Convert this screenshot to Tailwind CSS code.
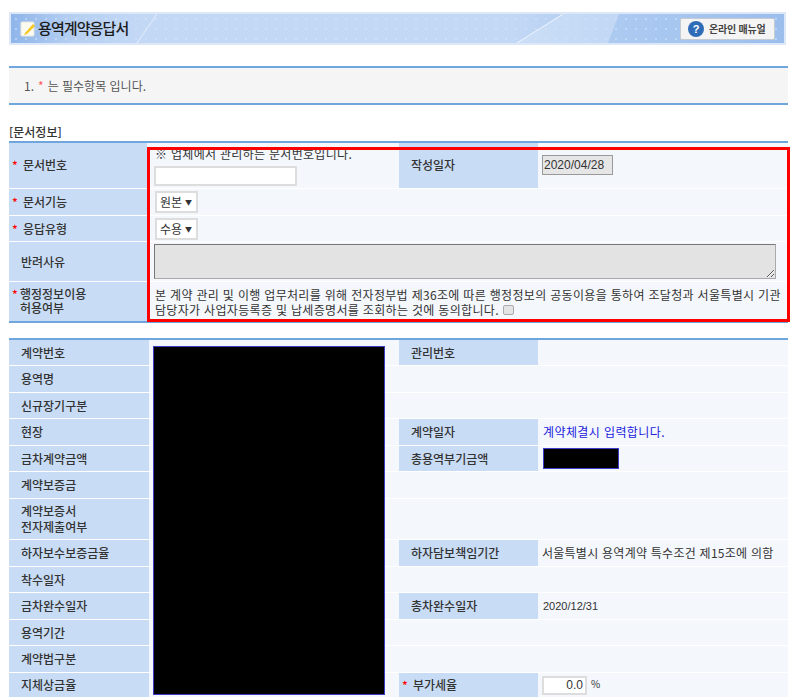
<!DOCTYPE html>
<html lang="ko">
<head>
<meta charset="UTF-8">
<title>용역계약응답서</title>
<script src="https://cdn.jsdelivr.net/npm/@tailwindcss/browser@4"></script>
</head>
<body class="bg-white text-[#333] text-[12px] font-['Liberation_Sans','Noto_Sans_CJK_KR',sans-serif] overflow-hidden">
<div class="relative h-[697px] w-[800px] overflow-hidden pl-[9px] pt-[12px]">

	<!-- title bar -->
	<div class="relative flex h-[33px] w-[777px] items-center justify-between overflow-hidden border-2 border-[#dce8f8] bg-[linear-gradient(90deg,#8fb5ea_0px,#b5cff2_60px,#c3d8f5_130px,#c3d8f5_500px,#aecbf1_590px,#9cbeed_770px)]">
		<div class="absolute inset-0 bg-[radial-gradient(#d8e6f9_1px,transparent_1px)] bg-[size:10px_10px] opacity-50"></div>
		<svg class="absolute inset-0" width="773" height="29" viewBox="0 0 773 29">
			<polygon points="506,29 552,0 608,0 597,29" fill="#d3e3f8" fill-opacity="0.55"/>
			<line x1="506" y1="29" x2="552" y2="0" stroke="#eef4fc" stroke-width="1"/>
			<line x1="126" y1="29" x2="146" y2="0" stroke="#e3edfa" stroke-width="1"/>
		</svg>
		<div class="relative flex items-center pl-[9px]">
			<svg class="mr-[2px]" width="16" height="16" viewBox="0 0 16 16">
				<rect x="1" y="1" width="13" height="14" rx="1" fill="#fbfaf0" stroke="#e8e8e0"/>
				<path d="M5 12 L13 3 L15 5 L7 13 L4 14 Z" fill="#f3c623"/>
			</svg>
			<span class="text-[15px] font-medium tracking-[-0.9px] text-[#1c1c1c] font-['Noto_Sans_CJK_KR',sans-serif]">용역계약응답서</span>
		</div>
		<div class="relative mr-[9px] flex h-[22px] w-[95px] items-center rounded-[2px] border border-[#c6cbd2] bg-[#f4f4f4] pl-[7px]">
			<svg width="16" height="16" viewBox="0 0 16 16">
				<circle cx="8" cy="8" r="8" fill="#2f6cb8"/>
				<text x="8" y="12" text-anchor="middle" font-size="11" font-weight="700" fill="#fff" font-family="Liberation Sans">?</text>
			</svg>
			<span class="ml-[5px] text-[10px] font-bold tracking-[-0.2px] text-[#444] font-['Noto_Sans_CJK_KR',sans-serif]">온라인 매뉴얼</span>
		</div>
	</div>

	<!-- notice -->
	<div class="mt-[21px] flex h-[39px] w-[779px] items-center border-y-2 border-[#6fa6de] bg-[#f5f5f5] pl-[15px] text-[#555] font-['Noto_Sans_CJK_KR',sans-serif]">
		1. <span class="mx-[4px] text-[#f55]">*</span> 는 필수항목 입니다.
	</div>

	<div class="mt-[19px] h-[17px] text-[12px] font-medium leading-[16px] font-['Noto_Sans_CJK_KR',sans-serif]">[문서정보]</div>

	<!-- document info -->
	<div class="w-[779px] border-y-2 border-[#6fa6de] bg-[#f4f7fc] font-['Noto_Sans_CJK_KR',sans-serif]">
		<div class="flex h-[46px] border-b border-white">
			<div class="flex w-[138px] shrink-0 items-center bg-[#c9dcf5] pb-[1px] pl-[3px] font-medium"><span class="w-[11px] text-[#f00]">*</span>문서번호</div>
			<div class="w-[252px] shrink-0 pl-[7px] pt-[2px]">
				<div class="h-[18px] whitespace-nowrap pl-[1px] leading-[18px] tracking-[0.3px]">※ 업체에서 관리하는 문서번호입니다.</div>
				<input type="text" class="mt-[3px] block h-[20px] w-[143px] border-2 border-[#ddd] bg-white">
			</div>
			<div class="flex w-[139px] shrink-0 items-center bg-[#c9dcf5] pb-[1px] pl-[12px] font-medium">작성일자</div>
			<div class="flex flex-1 items-center pb-[1px] pl-[4px]">
				<input type="text" value="2020/04/28" disabled class="h-[20px] w-[71px] border border-[#999] bg-[#e6e6e6] pl-[1px] text-[#333] font-['Liberation_Sans',sans-serif]">
			</div>
		</div>
		<div class="flex h-[27px] border-b border-white">
			<div class="flex w-[138px] shrink-0 items-center bg-[#c9dcf5] pl-[3px] font-medium"><span class="w-[11px] text-[#f00]">*</span>문서기능</div>
			<div class="flex flex-1 items-center pl-[8px]">
				<div class="relative h-[22px] w-[43px]">
					<select class="h-full w-full appearance-none border-2 border-[#ddd] bg-white pl-[3px]"><option>원본</option></select>
					<span class="pointer-events-none absolute right-[6px] top-[6px] text-[7px]">▼</span>
				</div>
			</div>
		</div>
		<div class="flex h-[26px] border-b border-white">
			<div class="flex w-[138px] shrink-0 items-center bg-[#c9dcf5] pl-[3px] font-medium"><span class="w-[11px] text-[#f00]">*</span>응답유형</div>
			<div class="flex flex-1 items-center pl-[8px]">
				<div class="relative h-[22px] w-[43px]">
					<select class="h-full w-full appearance-none border-2 border-[#ddd] bg-white pl-[3px]"><option>수용</option></select>
					<span class="pointer-events-none absolute right-[6px] top-[6px] text-[7px]">▼</span>
				</div>
			</div>
		</div>
		<div class="flex h-[40px] border-b border-white">
			<div class="flex w-[138px] shrink-0 items-center bg-[#c9dcf5] pl-[12px] font-medium">반려사유</div>
			<div class="flex flex-1 items-center pl-[7px]">
				<textarea disabled class="block h-[35px] w-[622px] border border-t-[#777] border-l-[#777] border-r-[#aaa] border-b-[#aaa] bg-[#e3e3e3]"></textarea>
			</div>
		</div>
		<div class="flex h-[39px]">
			<div class="flex w-[138px] shrink-0 bg-[#c9dcf5] pl-[3px] pt-[5px] font-medium leading-[14px]">
				<span class="w-[8px] text-[#f00]">*</span>
				<div>행정정보이용<br>허용여부</div>
			</div>
			<div class="min-w-0 flex-1 pl-[8px] pt-[5px] leading-[15px] tracking-[0.32px]">
				<div class="whitespace-nowrap">본 계약 관리 및 이행 업무처리를 위해 전자정부법 제36조에 따른 행정정보의 공동이용을 통하여 조달청과 서울특별시 기관</div>
				<div class="flex items-center whitespace-nowrap">담당자가 사업자등록증 및 납세증명서를 조회하는 것에 동의합니다.
					<input type="checkbox" disabled class="ml-[4px] h-[10px] w-[11px] appearance-none rounded-[2px] border border-[#aaa] bg-[#e4e4e4]">
				</div>
			</div>
		</div>
	</div>

	<!-- contract info -->
	<div class="mt-[15px] w-[779px] border-t-2 border-[#6fa6de] font-['Noto_Sans_CJK_KR',sans-serif]">
		<div class="flex h-[26px] border-b border-white bg-[#f4f7fc]">
			<div class="flex w-[140px] items-center bg-[#c9dcf5] pl-[12px] font-medium">계약번호</div>
			<div class="w-[250px]"></div>
			<div class="flex w-[139px] items-center bg-[#c9dcf5] pl-[12px] font-medium">관리번호</div>
			<div class="flex-1"></div>
		</div>
		<div class="flex h-[27px] border-b border-white bg-[#f4f7fc]">
			<div class="flex w-[140px] items-center bg-[#c9dcf5] pl-[12px] font-medium">용역명</div>
		</div>
		<div class="flex h-[26px] border-b border-white bg-[#f4f7fc]">
			<div class="flex w-[140px] items-center bg-[#c9dcf5] pl-[12px] font-medium">신규장기구분</div>
		</div>
		<div class="flex h-[27px] border-b border-white bg-[#f4f7fc]">
			<div class="flex w-[140px] items-center bg-[#c9dcf5] pl-[12px] font-medium">현장</div>
			<div class="w-[250px]"></div>
			<div class="flex w-[139px] items-center bg-[#c9dcf5] pl-[12px] font-medium">계약일자</div>
			<div class="flex flex-1 items-center pl-[5px] tracking-[0.4px] text-[#2222dd]">계약체결시 입력합니다.</div>
		</div>
		<div class="flex h-[26px] border-b border-white bg-[#f4f7fc]">
			<div class="flex w-[140px] items-center bg-[#c9dcf5] pl-[12px] font-medium">금차계약금액</div>
			<div class="w-[250px]"></div>
			<div class="flex w-[139px] items-center bg-[#c9dcf5] pl-[12px] font-medium">총용역부기금액</div>
			<div class="flex flex-1 items-center pl-[5px]"><div class="h-[21px] w-[76px] border border-[#3b3bc8] bg-black"></div></div>
		</div>
		<div class="flex h-[27px] border-b border-white bg-[#f4f7fc]">
			<div class="flex w-[140px] items-center bg-[#c9dcf5] pl-[12px] font-medium">계약보증금</div>
		</div>
		<div class="flex h-[41px] border-b border-white bg-[#f4f7fc]">
			<div class="flex w-[140px] items-center bg-[#c9dcf5] pl-[12px] font-medium leading-[16px]">계약보증서<br>전자제출여부</div>
		</div>
		<div class="flex h-[27px] border-b border-white bg-[#f4f7fc]">
			<div class="flex w-[140px] items-center bg-[#c9dcf5] pl-[12px] font-medium">하자보수보증금율</div>
			<div class="w-[250px]"></div>
			<div class="flex w-[139px] items-center bg-[#c9dcf5] pl-[12px] font-medium">하자담보책임기간</div>
			<div class="flex flex-1 items-center whitespace-nowrap pl-[4px] tracking-[0.25px]">서울특별시 용역계약 특수조건 제15조에 의함</div>
		</div>
		<div class="flex h-[26px] border-b border-white bg-[#f4f7fc]">
			<div class="flex w-[140px] items-center bg-[#c9dcf5] pl-[12px] font-medium">착수일자</div>
		</div>
		<div class="flex h-[27px] border-b border-white bg-[#f4f7fc]">
			<div class="flex w-[140px] items-center bg-[#c9dcf5] pl-[12px] font-medium">금차완수일자</div>
			<div class="w-[250px]"></div>
			<div class="flex w-[139px] items-center bg-[#c9dcf5] pl-[12px] font-medium">총차완수일자</div>
			<div class="flex flex-1 items-center pl-[5px] text-[11px] font-['Liberation_Sans',sans-serif]">2020/12/31</div>
		</div>
		<div class="flex h-[26px] border-b border-white bg-[#f4f7fc]">
			<div class="flex w-[140px] items-center bg-[#c9dcf5] pl-[12px] font-medium">용역기간</div>
		</div>
		<div class="flex h-[27px] border-b border-white bg-[#f4f7fc]">
			<div class="flex w-[140px] items-center bg-[#c9dcf5] pl-[12px] font-medium">계약법구분</div>
		</div>
		<div class="flex h-[25px] border-b border-white bg-[#f4f7fc]">
			<div class="flex w-[140px] items-center bg-[#c9dcf5] pl-[12px] font-medium">지체상금율</div>
			<div class="w-[250px]"></div>
			<div class="flex w-[139px] items-center bg-[#c9dcf5] pl-[3px] font-medium"><span class="w-[11px] text-[#f00]">*</span>부가세율</div>
			<div class="flex flex-1 items-center pl-[4px]">
				<input type="text" value="0.0" class="h-[19px] w-[45px] border-2 border-[#ddd] bg-white pr-[2px] text-right font-['Liberation_Sans',sans-serif]">
				<span class="mb-[4px] ml-[4px] text-[10px]">%</span>
			</div>
		</div>
	</div>

	<!-- overlays: redaction block and red highlight drawn over the form -->
	<div class="absolute left-[153px] top-[346px] h-[349px] w-[232px] border border-[#3b3bc8] bg-black"></div>
	<div class="pointer-events-none absolute left-[147px] top-[147px] h-[175px] w-[643px] border-[3px] border-[#f00]"></div>
</div>
</body>
</html>
